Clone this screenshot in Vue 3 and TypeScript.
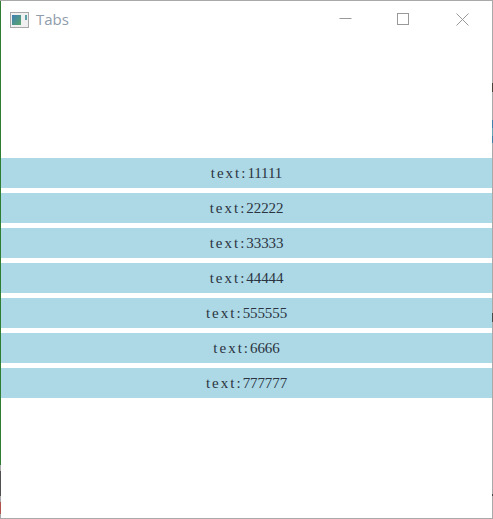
<script setup lang="ts">
interface Row { label: string; value: string }
const items: Row[] = ['11111', '22222', '33333', '44444', '555555', '6666', '777777'].map((value) => ({ label: 'text:', value }))

interface Segment { h: number; c: string }
const leftEdge: Segment[] = [
  { h: 464, c: '#2e7d32' },
  { h: 6, c: '#a9a9a9' },
  { h: 25, c: '#505050' },
  { h: 6, c: '#a9a9a9' },
  { h: 12, c: '#b0524a' },
  { h: 4, c: '#a9a9a9' },
]
const rightEdge: Segment[] = [
  { h: 82, c: '#a9a9a9' },
  { h: 9, c: '#4a4238' },
  { h: 28, c: '#a9a9a9' },
  { h: 8, c: '#3f7fa8' },
  { h: 8, c: '#6aa5b5' },
  { h: 7, c: '#3f7fa8' },
  { h: 170, c: '#a9a9a9' },
  { h: 9, c: '#4a4a4a' },
  { h: 172, c: '#a9a9a9' },
  { h: 2, c: '#444444' },
  { h: 22, c: '#a9a9a9' },
]
</script>

<template>
  <div class="window">
    <div class="edge">
      <span v-for="(s, i) in leftEdge" :key="i" :style="{ height: s.h + 'px', background: s.c }"></span>
    </div>
    <div class="main">
      <header class="titlebar">
        <svg class="app-icon" width="19" height="16" viewBox="0 0 19 16">
          <rect x="0.5" y="0.5" width="18" height="15" fill="#f0f0f0" stroke="#a8a8a8" />
          <defs>
            <linearGradient id="tabIcon" x1="0" y1="0" x2="1" y2="1">
              <stop offset="0" stop-color="#3f7fb5" />
              <stop offset="1" stop-color="#5aa76a" />
            </linearGradient>
          </defs>
          <rect x="2" y="3" width="9" height="10" fill="url(#tabIcon)" />
          <rect x="15" y="3" width="2" height="5" fill="#5f9fa8" />
        </svg>
        <span class="title">Tabs</span>
        <div class="controls">
          <button class="ctl" type="button" aria-label="Minimize">
            <svg width="13" height="13" viewBox="0 0 13 13"><path d="M0.5 5.5H12.5" stroke="#999" fill="none" /></svg>
          </button>
          <button class="ctl" type="button" aria-label="Maximize">
            <svg width="13" height="13" viewBox="0 0 13 13"><rect x="0.5" y="0.5" width="11" height="11" stroke="#999" fill="none" /></svg>
          </button>
          <button class="ctl" type="button" aria-label="Close">
            <svg width="13" height="13" viewBox="0 0 13 13"><path d="M0.5 0.5L12.5 12.5M12.5 0.5L0.5 12.5" stroke="#999" fill="none" /></svg>
          </button>
        </div>
      </header>
      <ul class="list">
        <li v-for="item in items" :key="item.value" class="row">
          <span class="label">{{ item.label }}</span><span class="value">{{ item.value }}</span>
        </li>
      </ul>
    </div>
    <div class="edge">
      <span v-for="(s, i) in rightEdge" :key="i" :style="{ height: s.h + 'px', background: s.c }"></span>
    </div>
  </div>
</template>

<style scoped>
.window {
  width: 493px;
  height: 519px;
  box-sizing: border-box;
  display: flex;
  background: #ffffff;
  border-top: 1px solid #a9a9a9;
  border-bottom: 1px solid #a9a9a9;
  overflow: hidden;
}
.edge {
  width: 1px;
  flex: none;
  display: flex;
  flex-direction: column;
}
.edge span {
  display: block;
  flex: none;
}
.main {
  flex: 1;
  min-width: 0;
  display: flex;
  flex-direction: column;
}
.titlebar {
  height: 37px;
  display: flex;
  align-items: center;
  padding-left: 9px;
}
.app-icon {
  flex: none;
}
.title {
  margin-left: 7px;
  margin-bottom: 2px;
  font-family: "Open Sans", "Noto Sans", sans-serif;
  font-size: 15px;
  color: #8f9cab;
}
.controls {
  margin-left: auto;
  padding-right: 1px;
  display: flex;
}
.ctl {
  width: 58px;
  height: 37px;
  padding: 0;
  border: 0;
  background: none;
  display: flex;
  align-items: center;
  justify-content: center;
}
.ctl:last-child {
  margin-left: 1px;
}
.list {
  list-style: none;
  margin: 120px 0 0;
  padding: 0;
  display: flex;
  flex-direction: column;
  gap: 5px;
}
.row {
  height: 30px;
  line-height: 31px;
  background: #add8e6;
  text-align: center;
  font-family: "Liberation Serif", serif;
  font-size: 15px;
  color: #2a3440;
}
.label {
  letter-spacing: 2px;
}
.value {
  letter-spacing: -0.1px;
}
</style>
